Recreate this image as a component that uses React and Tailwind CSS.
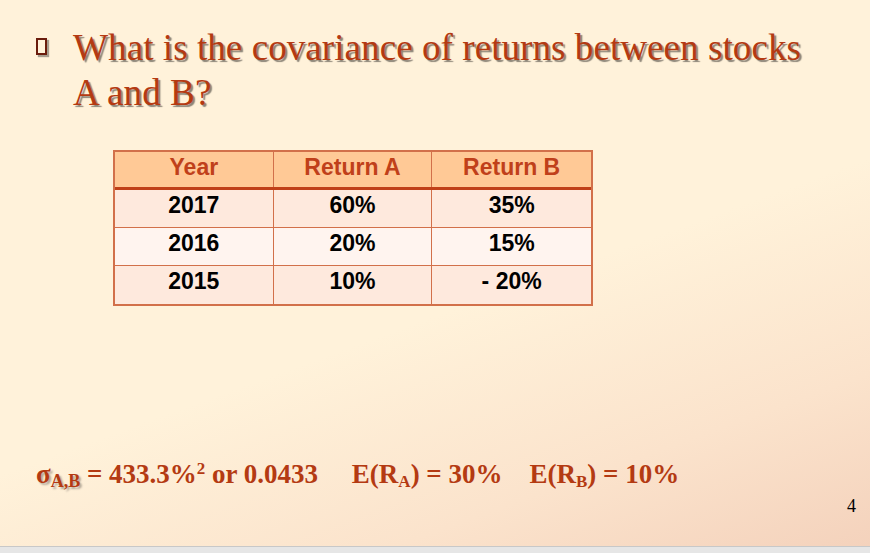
import React from "react";

const rows = [
  ["2017", "60%", "35%"],
  ["2016", "20%", "15%"],
  ["2015", "10%", "- 20%"],
];

const serif = { fontFamily: '"Liberation Serif", "Times New Roman", serif' };

const App = () => {
  return (
    <div className="w-[870px] h-[553px] flex flex-col overflow-hidden">
      <div
        className="relative flex-1 flex flex-col bg-[linear-gradient(160deg,#fff2da_0%,#fff2da_55%,#fbe3cc_80%,#f4d2bc_100%)]"
        style={serif}
      >
        {/* Title */}
        <div className="flex items-start pl-[36px] pt-[25px]">
          <div className="w-[11px] h-[17px] mt-[13px] border-[2px] border-[#6a1c0c] shadow-[2px_2px_1px_rgba(0,0,0,0.35)]"></div>
          <h1 className="ml-[26px] text-[37.2px] leading-[45px] font-normal text-[#b43a12] [text-shadow:2px_2px_1px_rgba(0,0,0,0.45)] w-[745px]">
            What is the covariance of returns between stocks A and B?
          </h1>
        </div>

        {/* Table */}
        <div className="ml-[113px] mt-[35px] w-[480px] border-[2px] border-[#d2704a]" style={{ fontFamily: '"Liberation Sans", Arial, sans-serif' }}>
          <div className="grid grid-cols-3 bg-[#ffc996] border-b-[3px] border-[#c04018] h-[38px]">
            {["Year", "Return A", "Return B"].map((h, i) => (
              <div
                key={h}
                className={`flex justify-center pt-[2px] text-[23px] leading-[26px] font-bold text-[#c0401a] ${i < 2 ? "border-r border-[#d2704a]" : ""}`}
              >
                {h}
              </div>
            ))}
          </div>
          {rows.map((r, ri) => (
            <div
              key={r[0]}
              className={`grid grid-cols-3 h-[38px] ${ri % 2 === 0 ? "bg-[#fee9dd]" : "bg-[#fff4ef]"} ${ri < 2 ? "border-b border-[#d2704a]" : ""}`}
            >
              {r.map((c, ci) => (
                <div
                  key={ci}
                  className={`flex justify-center pt-[2px] text-[23px] leading-[26px] font-bold text-black ${ci < 2 ? "border-r border-[#d2704a]" : ""}`}
                >
                  {c}
                </div>
              ))}
            </div>
          ))}
        </div>

        {/* Formula line */}
        <div className="mt-auto pl-[36px] pb-[52px] text-[27px] font-bold text-[#b43a12] whitespace-pre">
          <span className="[text-shadow:2px_2px_2px_rgba(0,0,0,0.3)]">σ</span>
          <sub className="text-[18px] [text-shadow:2px_2px_2px_rgba(0,0,0,0.3)]">A,B</sub>
          <span> = 433.3%</span>
          <sup className="text-[17px]">2</sup>
          <span> or 0.0433     E(R</span>
          <sub className="text-[17px]">A</sub>
          <span>) = 30%    E(R</span>
          <sub className="text-[17px]">B</sub>
          <span>) = 10%</span>
        </div>

        <div className="absolute right-[14px] bottom-[26px] text-[18px] text-black">4</div>
      </div>
      <div className="h-[7px] bg-[#e6e6e6] border-t border-[#c8c8c8]"></div>
    </div>
  );
};

export default App;
